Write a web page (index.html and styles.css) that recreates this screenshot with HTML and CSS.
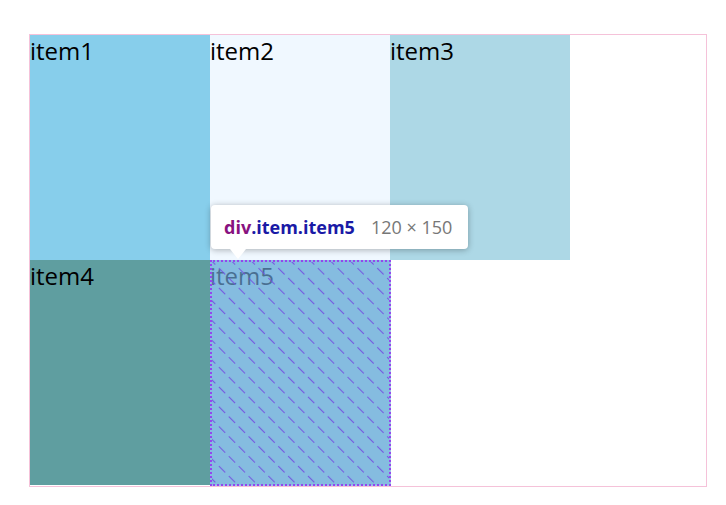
FILE: index.html
```html
<!DOCTYPE html>
<html>
<head>
<meta charset="utf-8">
<link rel="stylesheet" href="styles.css">
</head>
<body>
<div class="container">
  <div class="item item1">item1</div>
  <div class="item item2">item2</div>
  <div class="item item3">item3</div>
  <div class="item item4">item4</div>
  <div class="item item5">item5
    <div class="hl">
      <svg class="hatch" width="182" height="226" xmlns="http://www.w3.org/2000/svg">
        <defs>
          <pattern id="h" width="14" height="14" patternUnits="userSpaceOnUse" patternTransform="rotate(-45)">
            <line x1="0" y1="0" x2="0" y2="14" stroke="#7350e0" stroke-width="2.2" stroke-dasharray="7 5"/>
          </pattern>
        </defs>
        <rect width="182" height="226" fill="url(#h)" opacity="0.9"/>
      </svg>
    </div>
    <div class="tip">
      <span class="tag">div</span><span class="cls">.item.item5</span><span class="dim">120 × 150</span>
    </div>
  </div>
</div>
</body>
</html>
```

FILE: styles.css
```css
html, body { margin: 0; padding: 0; background: #fff; }
body { padding: 34px 19px 0 29px; }
.container {
  display: grid;
  grid-template-columns: repeat(3, 180px);
  grid-auto-rows: 225px;
  border: 1px solid #f5c2d9;
  height: 451px;
  font-family: "Open Sans", "Noto Sans", sans-serif;
  font-size: 24px;
  line-height: 32px;
  color: #000;
}
.item { position: relative; }
.item1 { background: #87ceeb; }
.item2 { background: #f0f8ff; }
.item3 { background: #add8e6; }
.item4 { background: #5f9ea0; }
.item5 { background: #b0e0e6; }
.hl {
  position: absolute;
  left: 0; top: 0; right: -1px; bottom: -1px;
  background: rgba(111, 168, 220, 0.66);
  border: 2px dotted #9446ee;
  box-sizing: border-box;
  overflow: hidden;
}
.hatch { position: absolute; left: -2px; top: -2px; }
.tip {
  position: absolute;
  left: 1px;
  bottom: calc(100% + 11px);
  width: 257px;
  height: 44px;
  box-sizing: border-box;
  padding: 0 0 0 13px;
  display: flex;
  align-items: center;
  background: #fff;
  border-radius: 4px;
  box-shadow: 0 1px 6px rgba(0,0,0,0.3);
  font-family: "Open Sans", "Noto Sans", sans-serif;
  font-size: 18px;
  line-height: 24px;
  white-space: nowrap;
}
.tip::after {
  content: "";
  position: absolute;
  left: 19px;
  top: 100%;
  border-left: 8px solid transparent;
  border-right: 8px solid transparent;
  border-top: 10px solid #fff;
}
.tag { color: #881280; font-weight: 700; }
.cls { color: #1a1aa6; font-weight: 700; }
.dim { color: #777; margin-left: 16px; }
```
